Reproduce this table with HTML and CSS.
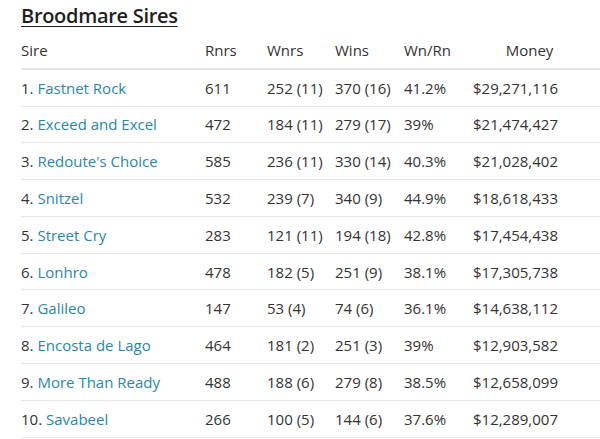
FILE: index.html
```html
<!DOCTYPE html>
<html>
<head>
<meta charset="utf-8">
<link rel="stylesheet" href="styles.css">
</head>
<body>
<div class="panel">
  <h2 class="title">Broodmare Sires</h2>
  <table class="sires">
    <thead>
      <tr><th class="c-sire">Sire</th><th class="c-rnrs">Rnrs</th><th class="c-wnrs">Wnrs</th><th class="c-wins">Wins</th><th class="c-wr">Wn/Rn</th><th class="c-money">Money</th></tr>
    </thead>
    <tbody>
      <tr><td>1. <a href="#">Fastnet Rock</a></td><td>611</td><td>252 (11)</td><td>370 (16)</td><td>41.2%</td><td>$29,271,116</td></tr>
      <tr><td>2. <a href="#">Exceed and Excel</a></td><td>472</td><td>184 (11)</td><td>279 (17)</td><td>39%</td><td>$21,474,427</td></tr>
      <tr><td>3. <a href="#">Redoute's Choice</a></td><td>585</td><td>236 (11)</td><td>330 (14)</td><td>40.3%</td><td>$21,028,402</td></tr>
      <tr><td>4. <a href="#">Snitzel</a></td><td>532</td><td>239 (7)</td><td>340 (9)</td><td>44.9%</td><td>$18,618,433</td></tr>
      <tr><td>5. <a href="#">Street Cry</a></td><td>283</td><td>121 (11)</td><td>194 (18)</td><td>42.8%</td><td>$17,454,438</td></tr>
      <tr><td>6. <a href="#">Lonhro</a></td><td>478</td><td>182 (5)</td><td>251 (9)</td><td>38.1%</td><td>$17,305,738</td></tr>
      <tr><td>7. <a href="#">Galileo</a></td><td>147</td><td>53 (4)</td><td>74 (6)</td><td>36.1%</td><td>$14,638,112</td></tr>
      <tr><td>8. <a href="#">Encosta de Lago</a></td><td>464</td><td>181 (2)</td><td>251 (3)</td><td>39%</td><td>$12,903,582</td></tr>
      <tr><td>9. <a href="#">More Than Ready</a></td><td>488</td><td>188 (6)</td><td>279 (8)</td><td>38.5%</td><td>$12,658,099</td></tr>
      <tr><td>10. <a href="#">Savabeel</a></td><td>266</td><td>100 (5)</td><td>144 (6)</td><td>37.6%</td><td>$12,289,007</td></tr>
    </tbody>
  </table>
</div>
</body>
</html>
```
FILE: styles.css
```css
html, body {
  margin: 0;
  padding: 0;
  background: #fff;
}
body {
  font-family: "Open Sans", "Liberation Sans", sans-serif;
  color: #333;
  font-size: 15px;
}
.panel {
  padding-left: 21px;
}
.title {
  margin: 0;
  font-size: 20px;
  font-weight: 600;
  letter-spacing: -0.3px;
  line-height: 32px;
  height: 32px;
  color: #1e1e1e;
  text-decoration: underline;
  text-decoration-thickness: 1px;
  text-underline-offset: 3px;
}
.sires {
  width: 579px;
  border-collapse: collapse;
  table-layout: fixed;
}
.sires th, .sires td {
  padding: 7.9px 0;
  line-height: 20px;
  text-align: left;
  font-weight: 400;
  white-space: nowrap;
}
.sires th {
  border-bottom: 2px solid #e6e6e6;
  color: #333;
}
.sires td {
  border-bottom: 1px solid #e6e6e6;
}
.c-sire { width: 184px; }
.c-rnrs { width: 62px; }
.c-wnrs { width: 68px; }
.c-wins { width: 69px; }
.c-wr { width: 69px; }
.sires th.c-money {
  text-align: center;
  padding-right: 14px;
}
.sires a {
  color: #2b87a8;
  text-decoration: none;
}
```
